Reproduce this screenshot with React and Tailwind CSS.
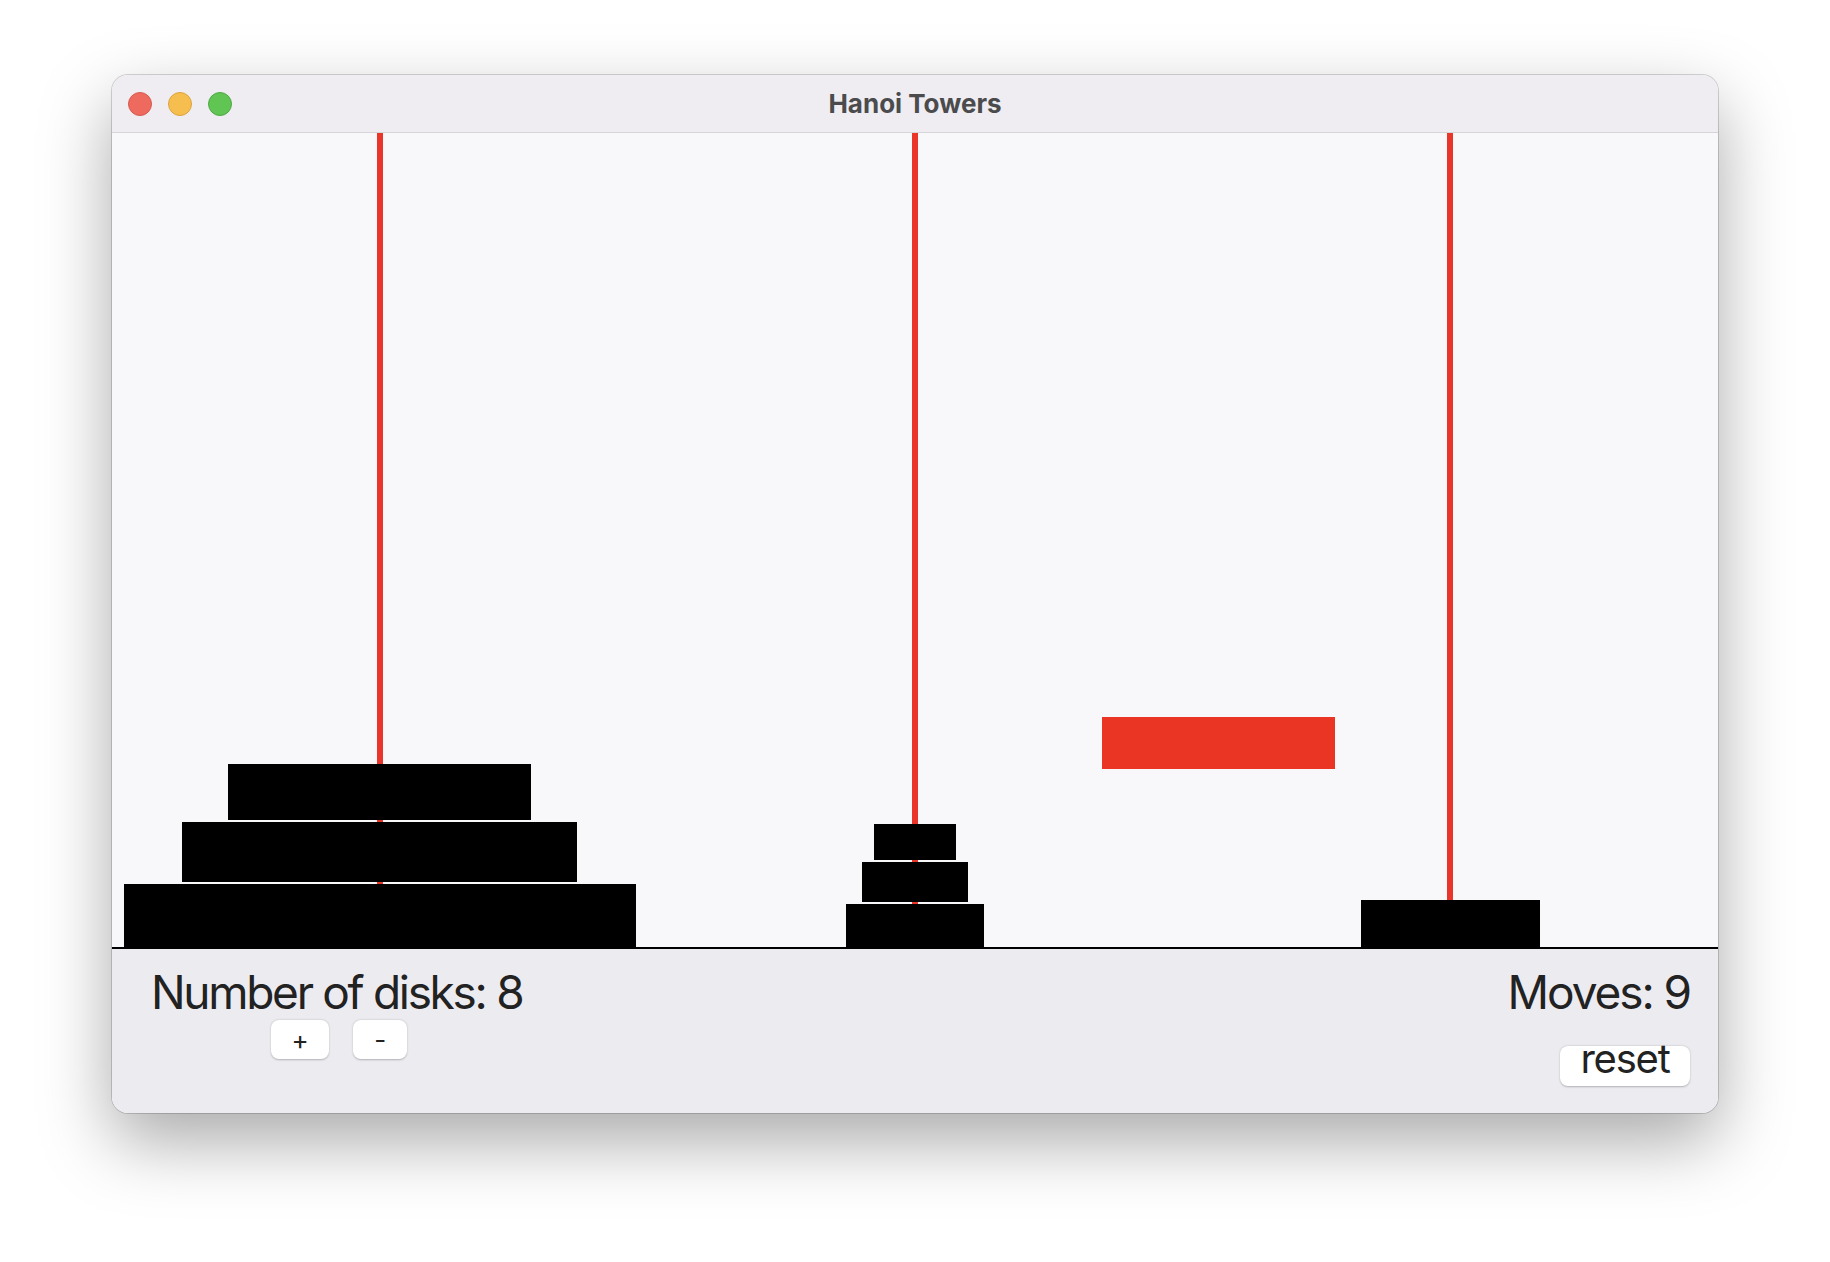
import { useState } from 'react';

const FONT = { fontFamily: 'Inter, "Noto Sans", sans-serif' };

// disk sizes measured off the board, index 0 = smallest
const DISKS = [
    { w: 82, h: 36 },
    { w: 106, h: 40 },
    { w: 138, h: 43 },
    { w: 179, h: 47 },
    { w: 233, h: 52 },
    { w: 303, h: 56 },
    { w: 395, h: 60 },
    { w: 512, h: 63 },
];

const START_TOWERS = [[7, 6, 5], [2, 1, 0], [3]];

function Peg({ disks }) {
    return (
        <div className="relative flex flex-col-reverse items-center gap-[2px]">
            <div className="absolute inset-y-0 left-1/2 w-[6px] -translate-x-1/2 bg-[#E9352A]" />
            {disks.map((d) => (
                <div
                    key={d}
                    className="relative bg-black"
                    style={{ width: DISKS[d].w, height: DISKS[d].h }}
                />
            ))}
        </div>
    );
}

function SmallButton({ label, width }) {
    return (
        <button
            className="h-[39px] rounded-[8px] bg-white text-[26px] leading-none text-[#222] shadow-[0_0.5px_2px_rgba(0,0,0,0.25)]"
            style={{ width }}
        >
            {label}
        </button>
    );
}

export default function App() {
    const [towers] = useState(START_TOWERS);
    const [moves] = useState(9);
    const held = 4;

    return (
        <div className="w-[1830px] h-[1262px] bg-white pl-[112px] pt-[75px]" style={FONT}>
            <div className="w-[1606px] rounded-[16px] overflow-hidden shadow-[0_0_0_1px_rgba(0,0,0,0.16),0_28px_70px_rgba(0,0,0,0.34)]">
                {/* Title bar */}
                <div className="grid h-[58px] grid-cols-[1fr_auto_1fr] items-center border-b border-[#D6D4D9] bg-[#EFEDF2]">
                    <div className="flex items-center gap-[16px] pl-[16px]">
                        <span className="h-[24px] w-[24px] rounded-full border border-[#D85A4F] bg-[#EE6A5F]" />
                        <span className="h-[24px] w-[24px] rounded-full border border-[#DCA53E] bg-[#F5BE4F]" />
                        <span className="h-[24px] w-[24px] rounded-full border border-[#4FAA44] bg-[#61C554]" />
                    </div>
                    <div className="text-[26px] font-bold leading-none text-[#4B4B4D]">Hanoi Towers</div>
                    <div />
                </div>

                {/* Board */}
                <div className="relative grid h-[816px] grid-cols-3 items-stretch border-b-2 border-black bg-[#F8F8FA]">
                    {towers.map((t, i) => (
                        <div key={i} className="flex justify-center">
                            <Peg disks={t} />
                        </div>
                    ))}
                    <div
                        className="absolute left-[990px] top-[584px] bg-[#EA3424]"
                        style={{ width: DISKS[held].w, height: DISKS[held].h }}
                    />
                </div>

                {/* Controls */}
                <div className="flex h-[164px] justify-between bg-[#ECEBF0] pl-[39px] pr-[28px] pt-[20px] text-[#222]">
                    <div className="flex flex-col items-center">
                        <div className="text-[46px] leading-none tracking-[-0.05em]">Number of disks: 8</div>
                        <div className="ml-[5px] mt-[5px] flex gap-[24px]">
                            <SmallButton label="+" width={58} />
                            <SmallButton label="-" width={54} />
                        </div>
                    </div>
                    <div className="flex flex-col items-end">
                        <div className="text-[46px] leading-none tracking-[-0.045em]">Moves: {moves}</div>
                        <button className="mt-[31px] flex h-[40px] w-[130px] items-start justify-center rounded-[8px] bg-white text-[40px] leading-[26px] tracking-[-0.03em] text-[#222] shadow-[0_0.5px_2px_rgba(0,0,0,0.25)]">
                            reset
                        </button>
                    </div>
                </div>
            </div>
        </div>
    );
}
